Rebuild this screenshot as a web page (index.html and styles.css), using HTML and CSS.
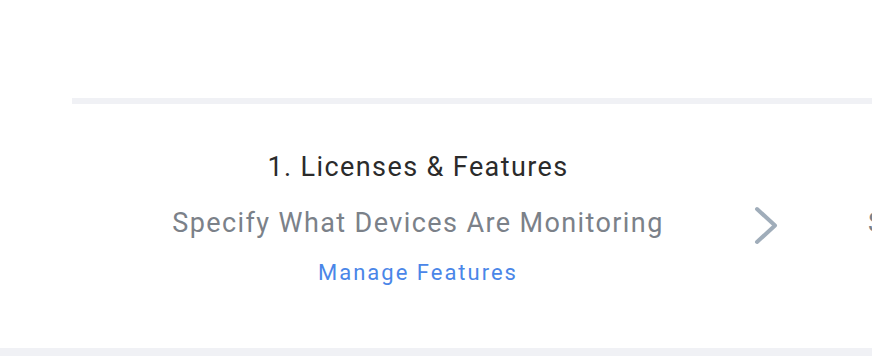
FILE: index.html
```html
<!DOCTYPE html>
<html lang="en">
<head>
    <meta charset="UTF-8">
    <meta name="viewport" content="width=device-width, initial-scale=1.0">
    <title>Setup Steps</title>
    <link rel="stylesheet" href="styles.css">
</head>
<body>
    <div class="page">
        <div class="steps-card">
            <div class="steps">
                <div class="step">
                    <div class="step-title">1. Licenses &amp; Features</div>
                    <div class="step-desc">Specify What Devices Are Monitoring</div>
                    <a class="step-link" href="#">Manage Features</a>
                </div>

                <div class="step-arrow">
                    <svg width="24" height="40" viewBox="0 0 24 40">
                        <polyline points="3,3 21,19.5 3,36" fill="none" stroke="#a0adba" stroke-width="4" stroke-linecap="round" stroke-linejoin="round"/>
                    </svg>
                </div>

                <div class="step step-next">
                    <div class="step-title">2. Alerts</div>
                    <div class="step-desc">Set Up Alerts And Notifications</div>
                    <a class="step-link" href="#">Alerts</a>
                </div>
            </div>
        </div>
        <div class="footer-band"></div>
    </div>
</body>
</html>
```

FILE: styles.css
```css
* {
    margin: 0;
    padding: 0;
    box-sizing: border-box;
}

body {
    font-family: Roboto, 'Liberation Sans', Arial, sans-serif;
    background: #fff;
    color: #2b2b2b;
    overflow: hidden;
}

.page {
    padding-top: 98px;
    height: 356px;
}

.steps-card {
    margin-left: 72px;
    border-top: 6px solid #f0f1f5;
    height: 250px;
    overflow: hidden;
}

.steps {
    display: flex;
    align-items: flex-start;
    padding-top: 47px;
    padding-left: 76px;
}

.step {
    flex: 0 0 540px;
    text-align: center;
}

.step-title {
    font-size: 27px;
    line-height: 32px;
    letter-spacing: 1.4px;
    color: #2b2b2b;
}

.step-desc {
    margin-top: 24px;
    font-size: 27px;
    line-height: 32px;
    letter-spacing: 1.4px;
    color: #7b8189;
    white-space: nowrap;
}

/* next step is cut by the card edge, only its description shows */
.step-next .step-desc {
    text-align: left;
    padding-left: 24px;
}

.step-link {
    display: inline-block;
    margin-top: 20px;
    font-size: 22px;
    line-height: 28px;
    letter-spacing: 2px;
    color: #4a86e8;
    text-decoration: none;
}

.step-arrow {
    flex: 0 0 156px;
    display: flex;
    justify-content: center;
    padding-top: 55px;
}

.footer-band {
    height: 8px;
    background: #f0f1f5;
}
```
